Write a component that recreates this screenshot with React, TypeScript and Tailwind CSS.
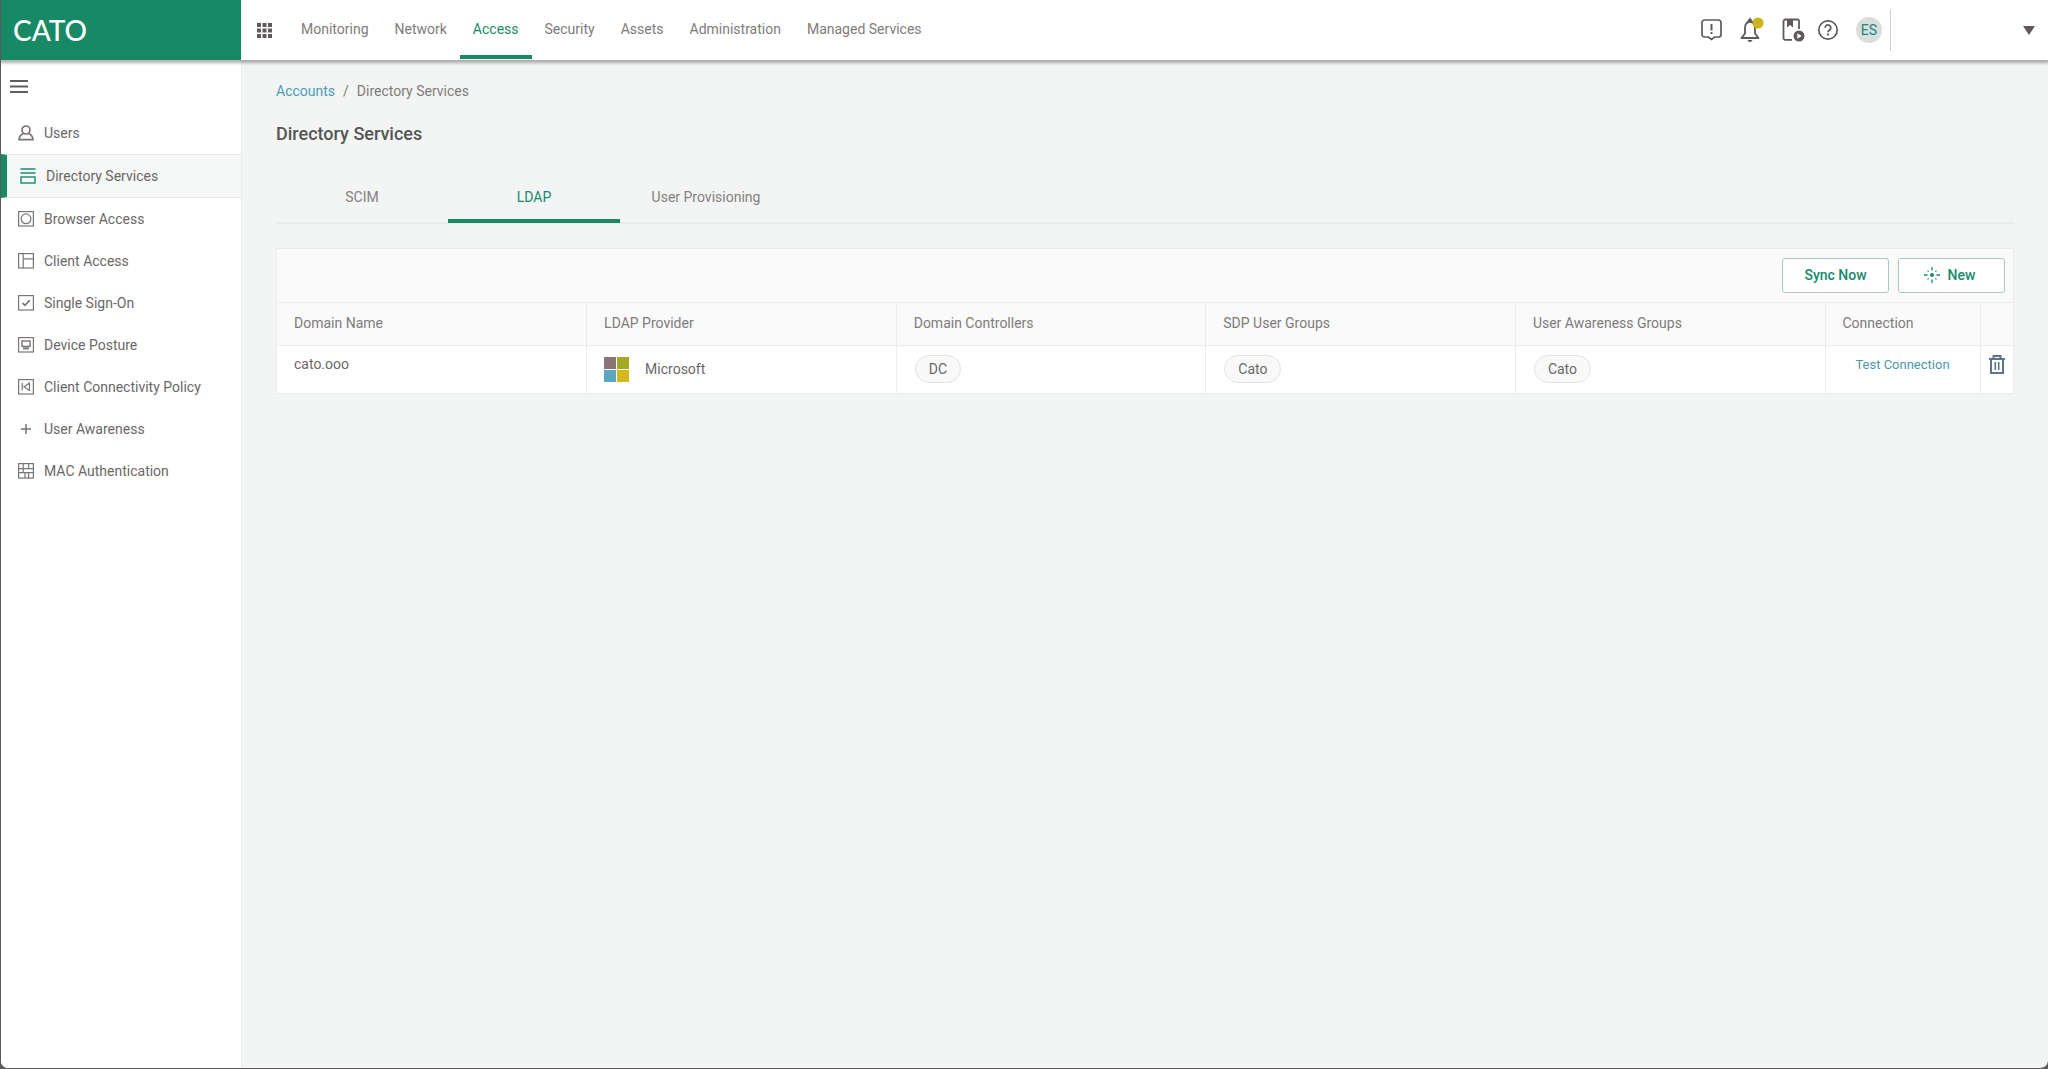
import type { ReactNode } from "react";

interface IconProps {
  className?: string;
  children: ReactNode;
}

// 16px outline icon used by the sidebar entries
function SideIcon({ className = "", children }: IconProps) {
  return (
    <svg viewBox="0 0 16 16" className={`w-4 h-4 shrink-0 ${className}`} fill="none" stroke="currentColor" strokeWidth="1.2" aria-hidden="true">
      {children}
    </svg>
  );
}

const frame = <rect x="0.6" y="0.6" width="14.8" height="14.4" />;

const navItems = ["Monitoring", "Network", "Access", "Security", "Assets", "Administration", "Managed Services"];

const sideItems = [
  {
    label: "Users",
    icon: (
      <g strokeWidth="1.7">
        <circle cx="8" cy="5" r="4" />
        <path d="M5.3 8.4C2.8 9.6 1.2 11.4 1 14.7h14c-.2-3.3-1.8-5.1-4.3-6.3" />
      </g>
    ),
  },
  {
    label: "Directory Services",
    icon: (
      <g strokeWidth="1.4">
        <path d="M.5 1h15M.5 5h15" />
        <rect x="1" y="9" width="14" height="6" />
      </g>
    ),
  },
  {
    label: "Browser Access",
    icon: (
      <>
        {frame}
        <circle cx="8" cy="7.8" r="4.9" />
      </>
    ),
  },
  {
    label: "Client Access",
    icon: (
      <>
        {frame}
        <path d="M5.2 .6v14.4M5.2 5.8h10" />
      </>
    ),
  },
  {
    label: "Single Sign-On",
    icon: (
      <>
        {frame}
        <path d="M4.5 8l2.4 2.4 4.8-5" strokeWidth="1.7" />
      </>
    ),
  },
  {
    label: "Device Posture",
    icon: (
      <>
        {frame}
        <rect x="4" y="4" width="8" height="5.4" strokeWidth="1.4" />
        <path d="M5 11.4h6" strokeWidth="2" />
      </>
    ),
  },
  {
    label: "Client Connectivity Policy",
    icon: (
      <>
        {frame}
        <path d="M4.2 4v7.6M11.4 4.2v7.2L6 7.8z" />
      </>
    ),
  },
  {
    label: "User Awareness",
    icon: <path d="M8 3v10M3 8h10" strokeWidth="1.5" />,
  },
  {
    label: "MAC Authentication",
    icon: (
      <>
        {frame}
        <path d="M.6 5.6h4.600M5.200 .6v9M10.600 .6v5M5.200 5.600h10.200M.6 9.600h10M10.600 9.600h4.800M7 9.600V15M10.600 9.600V15" />
      </>
    ),
  },
];

const tabs = ["SCIM", "LDAP", "User Provisioning"];

const columns = ["Domain Name", "LDAP Provider", "Domain Controllers", "SDP User Groups", "User Awareness Groups"];

function Header() {
  return (
    <header className="relative z-10 flex h-[60px] shrink-0 bg-white shadow-[0_2px_3px_1px_rgba(80,85,80,0.45)]">
      <div className="flex w-60 shrink-0 items-center bg-[#178a65] pl-3 text-white">
        <span className="font-['Lato',sans-serif] text-[28px] leading-9 font-medium">CATO</span>
      </div>
      <button aria-label="Apps" className="ml-4 shrink-0">
        <svg viewBox="0 0 15 15" className="w-[15px] h-[15px]" fill="#5f5a5a">
          {[0, 5.5, 11].map((y) => [0, 5.5, 11].map((x) => <rect key={`${x}-${y}`} x={x} y={y} width="4" height="4" />))}
        </svg>
      </button>
      <nav className="ml-4 flex">
        {navItems.map((item) => (
          <a
            key={item}
            href="#"
            className={`mb-px flex items-center border-b-4 px-[13px] pt-0.5 ${
              item === "Access" ? "border-[#178a65] text-[#178a65]" : "border-transparent text-[#807b7b]"
            }`}
          >
            {item}
          </a>
        ))}
      </nav>
      <div className="ml-auto flex items-center text-[#5f5a5a]">
        <button aria-label="Announcements" className="mr-[18px]">
          <svg viewBox="0 0 21 22" className="w-[21px] h-[22px]" fill="none" stroke="currentColor" strokeWidth="1.7">
            <path d="M3.5 1h14A2.5 2.5 0 0 1 20 3.500v12a2.500 2.500 0 0 1-2.500 2.500h-4L10.500 20.500 7.500 18h-4A2.500 2.500 0 0 1 1 15.500v-12A2.500 2.500 0 0 1 3.500 1z" />
            <path d="M10.500 5v6.500M10.500 13v2" strokeWidth="2" />
          </svg>
        </button>
        <button aria-label="Notifications" className="mr-[18px]">
          <svg viewBox="0 0 24 26" className="w-6 h-[26px]" fill="none" stroke="currentColor" strokeWidth="1.8">
            <path d="M10 4.500C6.500 5.200 5 7.500 5 11v5.500L1.500 21h17L15 16.500V11c0-3.500-1.500-5.800-5-6.500z" strokeLinejoin="round" />
            <path d="M8 4.500L10 2l2 2.500z" fill="currentColor" />
            <path d="M7.500 23a2.600 2.600 0 0 0 5 0z" fill="currentColor" stroke="none" />
            <circle cx="18" cy="6" r="5.600" fill="#cdb51e" stroke="none" />
          </svg>
        </button>
        <button aria-label="Guides" className="mr-3">
          <svg viewBox="0 0 23 24" className="w-[23px] h-6" fill="none" stroke="currentColor" strokeWidth="1.8">
            <path d="M17 11V3a1.500 1.500 0 0 0-1.500-1.500h-12A2 2 0 0 0 1.500 3.500V20a1.800 1.800 0 0 0 1.800 1.800H10" />
            <path d="M5 1.500h6v8L8 7 5 9.500z" fill="currentColor" stroke="none" />
            <circle cx="17" cy="18" r="5.500" fill="currentColor" stroke="none" />
            <path d="M15.300 15.300v5.400l4.400-2.700z" fill="#fff" stroke="none" />
          </svg>
        </button>
        <button aria-label="Help" className="mr-[17px]">
          <svg viewBox="0 0 22 22" className="w-[22px] h-[22px]" fill="none" stroke="currentColor" strokeWidth="1.7">
            <circle cx="11" cy="11" r="9.200" />
            <path d="M8.200 8.800a2.800 2.800 0 1 1 4.400 2.200c-1 .7-1.600 1.100-1.600 2.300M11 14.600v1.800" strokeWidth="1.800" />
          </svg>
        </button>
        <button className="h-[26px] w-[26px] rounded-full bg-[#d9dddb] text-[#178a7a]">ES</button>
        <div className="ml-2 h-[42px] w-px bg-[#cfcfcf]" />
        <button aria-label="Select account" className="ml-[132px] mr-[13px]">
          <svg viewBox="0 0 12 9" className="w-3 h-[9px]" fill="currentColor">
            <path d="M0 0h12L6 9z" />
          </svg>
        </button>
      </div>
    </header>
  );
}

function Sidebar() {
  return (
    <aside className="w-[241px] shrink-0 border-r border-[#e9eceb] bg-white pt-5 text-[#6a6767]">
      <button aria-label="Toggle menu" className="ml-[9px] block">
        <svg viewBox="0 0 18 13" className="w-[18px] h-[13px]" stroke="#625c5c" strokeWidth="1.8">
          <path d="M0 1h18M0 6.500h18M0 12h18" />
        </svg>
      </button>
      <nav className="mt-[19px]">
        {sideItems.map((item) =>
          item.label === "Directory Services" ? (
            <a
              key={item.label}
              href="#"
              className="flex h-11 items-center gap-2.5 border-y border-l-[6px] border-y-[#e6e9e7] border-l-[#178a65] bg-[#f5f7f6] pl-[13px]"
            >
              <SideIcon className="text-[#178a72]">{item.icon}</SideIcon>
              {item.label}
            </a>
          ) : (
            <a key={item.label} href="#" className="flex h-[42px] items-center gap-2.5 pl-[17px]">
              <SideIcon className="text-[#7b7575]">{item.icon}</SideIcon>
              {item.label}
            </a>
          )
        )}
      </nav>
    </aside>
  );
}

function Chip({ label }: { label: string }) {
  return (
    <span className="ml-px inline-block rounded-full border border-[#e3e4e4] bg-[#f9f9f9] px-[13px] py-[2px] leading-[22px]">{label}</span>
  );
}

function DirectoryTable() {
  return (
    <section className="mt-6 border border-[#e9eceb] bg-[#fafafa]">
      <div className="flex h-[53px] items-center justify-end gap-[9px] px-2">
        <button className="h-[35px] w-[107px] rounded-[3px] border border-[#a3c9c9] bg-white pb-0.5 font-medium text-[#178a6c]">
          Sync Now
        </button>
        <button className="flex h-[35px] w-[107px] items-center justify-center gap-2 rounded-[3px] border border-[#a3c9c9] bg-white pr-1 pb-0.5 font-medium text-[#178a6c]">
          <svg viewBox="0 0 16 16" className="w-4 h-4" fill="none" stroke="currentColor" strokeWidth="1.3" aria-hidden="true">
            <circle cx="8" cy="8" r="2" fill="currentColor" stroke="none" />
            <path d="M8 0v3.500M8 12.500V16M0 8h3.500M12.500 8H16" />
            <path d="M3.600 3.600l1 1M11.400 11.400l1 1M3.600 12.400l1-1M11.400 4.600l1-1" />
          </svg>
          New
        </button>
      </div>
      <table className="w-full table-fixed border-collapse text-left">
        <thead>
          <tr className="h-[43px] border-y border-[#ebeceb] text-[#807b7b]">
            {columns.map((column) => (
              <th key={column} className="border-r border-[#ebeceb] px-[17px] pb-0.5 font-normal">
                {column}
              </th>
            ))}
            <th className="w-[155px] border-r border-[#ebeceb] px-[17px] pb-0.5 font-normal">Connection</th>
            <th className="w-[33px]" aria-label="Actions" />
          </tr>
        </thead>
        <tbody>
          <tr className="h-[47px] bg-white text-[#6a6767]">
            <td className="border-r border-[#ebeceb] px-[17px] pb-2.5">cato.ooo</td>
            <td className="border-r border-[#ebeceb] px-[17px]">
              <div className="flex items-center gap-4">
                <svg viewBox="0 0 25 25" className="w-[25px] h-[25px]" aria-hidden="true">
                  <rect width="12" height="12" fill="#8b7572" />
                  <rect x="13" width="12" height="12" fill="#a3a923" />
                  <rect y="13" width="12" height="12" fill="#5ba6c0" />
                  <rect x="13" y="13" width="12" height="12" fill="#d3b81e" />
                </svg>
                Microsoft
              </div>
            </td>
            <td className="border-r border-[#ebeceb] px-[17px]">
              <Chip label="DC" />
            </td>
            <td className="border-r border-[#ebeceb] px-[17px]">
              <Chip label="Cato" />
            </td>
            <td className="border-r border-[#ebeceb] px-[17px]">
              <Chip label="Cato" />
            </td>
            <td className="border-r border-[#ebeceb] pb-2.5 text-center">
              <button className="text-[13px] text-[#4b97ad]">Test Connection</button>
            </td>
            <td className="pb-2.5 text-center">
              <button aria-label="Delete" className="block mx-auto">
                <svg viewBox="0 0 16 19" className="w-4 h-[19px]" fill="none" stroke="#5d7590" strokeWidth="2">
                  <path d="M0 4h16M4.500 4V1h7v3M2 4v14h12V4" />
                  <path d="M6.300 7v8M9.700 7v8" strokeWidth="1.6" />
                </svg>
              </button>
            </td>
          </tr>
        </tbody>
      </table>
    </section>
  );
}

export default function App() {
  return (
    <div className="min-h-screen bg-[#5a5a5a] font-['Roboto',sans-serif] text-sm">
      <div className="flex min-h-screen flex-col overflow-hidden rounded-b-lg border-b border-l border-[#5a5a5a] bg-[#f3f5f4]">
        <Header />
        <div className="flex grow">
          <Sidebar />
          <main className="min-w-0 grow px-[34px] pt-[21px]">
            <div className="flex gap-2 text-[#807b7b]">
              <a href="#" className="text-[#4b9bb5]">
                Accounts
              </a>
              <span>/</span>
              <span>Directory Services</span>
            </div>
            <h1 className="mt-[19px] text-lg leading-7 font-medium text-[#555]">Directory Services</h1>
            <div className="mt-[22px] flex border-b-2 border-[#eaecec]">
              {tabs.map((tab) => (
                <button
                  key={tab}
                  className={`-mb-px h-[53px] w-[172px] border-b-4 pt-1 ${
                    tab === "LDAP" ? "border-[#178a65] text-[#178a72]" : "border-transparent text-[#858080]"
                  }`}
                >
                  {tab}
                </button>
              ))}
            </div>
            <DirectoryTable />
          </main>
        </div>
      </div>
    </div>
  );
}
